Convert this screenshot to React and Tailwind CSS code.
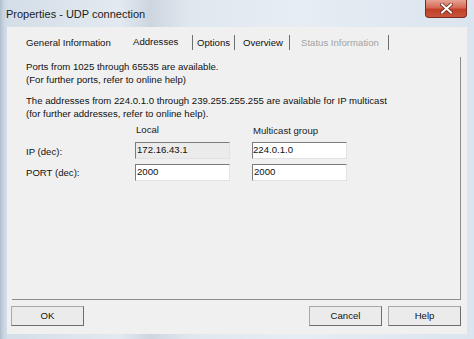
import React from "react";

function Tab({ label, w, pl, border, selected, disabled }) {
  return (
    <div
      className={`h-[15px] flex items-center ${border ? "border-r border-[#6f6f6f]" : ""} ${selected ? "pb-[3px]" : ""} ${disabled ? "text-[#a3a3a3]" : "text-[#111]"}`}
      style={{ width: w, paddingLeft: pl }}
    >
      <span className="whitespace-nowrap leading-[13px]">{label}</span>
    </div>
  );
}

function Field({ value, disabled, caretFirst }) {
  return (
    <div
      className={`h-[17px] w-[95px] border border-t-[#7b7b7b] border-l-[#7b7b7b] border-r-[#e2e2e2] border-b-[#e2e2e2] ${disabled ? "bg-[#ebebeb]" : "bg-white"} ${caretFirst ? "pl-0" : "pl-[1px]"} leading-[13px] text-[#111] whitespace-nowrap overflow-hidden`}
    >
      {value}
    </div>
  );
}

function Button({ label }) {
  return (
    <div className="w-[73px] h-[20px] flex items-center justify-center bg-[#ebebeb] border border-[#a9a9a9] border-r-[#6d6d6d] border-b-[#6d6d6d] text-[#111]">
      {label}
    </div>
  );
}

export default function App() {
  return (
    <div
      className="w-[474px] h-[339px] flex flex-col overflow-hidden bg-[linear-gradient(90deg,#aebccc_0px,#c6d2de_3px,#d4dee8_7px,#e2e9f0_120px,#cdd6df_150px,#e0e8ef_190px,#e6edf3_300px,#dbe5ef_474px)]"
      style={{ fontFamily: '"Liberation Sans", Arial, sans-serif' }}
    >
      {/* Title bar */}
      <div className="h-[27px] flex items-start justify-between pl-[6px] pr-[7px] shrink-0">
        <div className="pt-[8px] text-[11px] leading-[13px] text-[#1b1b1b]">
          Properties - UDP connection
        </div>
        <div className="w-[42px] h-[18px] rounded-b-[4px] border border-t-0 border-[#7e2a1f] bg-[linear-gradient(180deg,#e7a394_0%,#d46a55_45%,#c23f27_55%,#c9553d_100%)] flex items-center justify-center">
          <svg width="13" height="11" viewBox="0 0 13 11">
            <path d="M2 1.5 L11 9.5 M11 1.5 L2 9.5" stroke="#6a2418" strokeWidth="3.6" strokeLinecap="square" />
            <path d="M2 1.5 L11 9.5 M11 1.5 L2 9.5" stroke="#ffffff" strokeWidth="2" strokeLinecap="square" />
          </svg>
        </div>
      </div>

      {/* Client area */}
      <div className="mx-[7px] mb-[5px] flex-1 bg-[#f0f0f0] flex flex-col text-[9.6px]">
        {/* Tabs */}
        <div className="h-[30px] pt-[8px] pl-[5px] flex items-start shrink-0">
          <Tab label="General Information" w={108} pl={14} />
          <Tab label="Addresses" w={73} pl={13} border selected />
          <Tab label="Options" w={42} pl={4} border />
          <Tab label="Overview" w={55} pl={8} border />
          <Tab label="Status Information" w={99} pl={11} border disabled />
        </div>

        {/* Panel */}
        <div className="ml-[5px] mr-[6px] h-[243px] border-r border-b border-[#8c8c8c] pt-[3px] pl-[14px] text-[#111] leading-[13px] shrink-0">
          <div>Ports from 1025 through 65535 are available.</div>
          <div>(For further ports, refer to online help)</div>
          <div className="mt-[8px]">
            The addresses from 224.0.1.0 through 239.255.255.255 are available for IP multicast
          </div>
          <div>(for further addresses, refer to online help).</div>

          <div className="mt-[3px] grid grid-cols-[87px_95px_95px] gap-x-[22px] gap-y-[5px] items-start">
            <div />
            <div className="pl-[1px] text-[#222]">Local</div>
            <div className="pl-[1px] pt-[1px] text-[#222]">Multicast group</div>

            <div className="pt-[3px]">IP (dec):</div>
            <Field value="172.16.43.1" disabled />
            <Field value="224.0.1.0" caretFirst />

            <div className="pt-[2px]">PORT (dec):</div>
            <Field value="2000" />
            <Field value="2000" />
          </div>
        </div>

        {/* Buttons */}
        <div className="pt-[6px] pl-[4px] pr-[6px] flex items-start">
          <Button label="OK" />
          <div className="flex-1" />
          <Button label="Cancel" />
          <div className="w-[6px]" />
          <Button label="Help" />
        </div>
      </div>
    </div>
  );
}
